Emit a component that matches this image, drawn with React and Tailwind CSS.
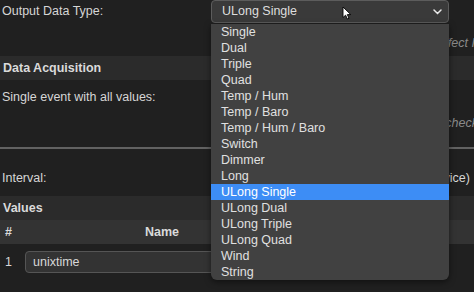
import React from 'react';

const OPTIONS = [
  'Single', 'Dual', 'Triple', 'Quad', 'Temp / Hum', 'Temp / Baro', 'Temp / Hum / Baro',
  'Switch', 'Dimmer', 'Long', 'ULong Single', 'ULong Dual', 'ULong Triple', 'ULong Quad',
  'Wind', 'String',
];
const SELECTED = 'ULong Single';

function Hint({ children, className = '' }) {
  return (
    <div className={`flex justify-end overflow-hidden whitespace-nowrap pl-[206px] h-[16px] leading-[16px] italic text-[#8a8a8a] ${className}`}>
      <span className="shrink-0">{children}</span>
    </div>
  );
}

function SectionBar({ children, className = '' }) {
  return (
    <div className={`flex items-center h-[24px] pl-[3px] bg-[#2b2b2b] font-bold text-[#dadada] ${className}`}>
      {children}
    </div>
  );
}

function Cursor() {
  return (
    <svg className="absolute left-[342px] top-[6px]" width="10" height="14" viewBox="0 0 10 14">
      <path d="M1 1 L1 11.5 L3.6 9.2 L5.4 13 L7 12.3 L5.3 8.6 L8.8 8.6 Z" fill="#fff" stroke="#000" strokeWidth="0.9" strokeLinejoin="round" />
    </svg>
  );
}

export default function App() {
  return (
    <div
      className="relative w-[474px] h-[292px] overflow-hidden bg-[#202020] text-[#d6d6d6] text-[12.5px]"
      style={{ fontFamily: '"Liberation Sans", Arial, sans-serif' }}
    >
      {/* Output data type */}
      <div className="flex items-center h-[23px]">
        <div className="w-[211px] pl-[2px]">Output Data Type:</div>
        <div className="w-[238px] h-[23px] flex items-center justify-between pl-[10px] pr-[6px] rounded-[4px] border border-[#5c5c5c] bg-[#3a3a3a] text-[#dedede]">
          <span>{SELECTED}</span>
          <svg width="9" height="6" viewBox="0 0 9 6">
            <path d="M1 1 L4.5 4.5 L8 1" fill="none" stroke="#e8e8e8" strokeWidth="1.5" strokeLinecap="round" />
          </svg>
        </div>
      </div>
      <Hint className="mt-[12px] -mr-[1px]">Ignored when value is a switch or Effect I</Hint>

      <SectionBar className="mt-[5px] h-[23px]">Data Acquisition</SectionBar>

      <div className="flex items-center h-[23px] mt-[6px]">
        <div className="w-[211px] pl-[2px]">Single event with all values:</div>
        <input type="checkbox" className="w-[13px] h-[13px]" />
      </div>
      <Hint className="mt-[6px] -mr-[4px]">Send all values in one event, uncheck</Hint>

      <div className="mt-[16px] h-[2px] bg-[#626262]" />

      <div className="flex items-center h-[23px] mt-[18px]">
        <div className="w-[211px] pl-[2px]">Interval:</div>
        <div className="w-[238px] h-[22px] rounded-[4px] border border-[#555] bg-[#333]" />
        <div className="flex-1 flex justify-end overflow-hidden whitespace-nowrap pr-[4px]">
          <span className="shrink-0">(0 = on device)</span>
        </div>
      </div>

      <SectionBar className="mt-[6px]">Values</SectionBar>

      <div className="flex items-center h-[24px] bg-[#333333] font-bold text-[#dadada]">
        <div className="w-[20px] pl-[5px]">#</div>
        <div className="w-[284px] text-center">Name</div>
        <div className="flex-1 text-center">Decimals</div>
      </div>

      <div className="flex items-center pt-[7px]">
        <div className="w-[25px] pl-[5px]">1</div>
        <div className="w-[280px] h-[22px] flex items-center pl-[7px] rounded-[4px] border border-[#555] bg-[#333] text-[#d8d8d8]">
          unixtime
        </div>
      </div>

      {/* Open select list */}
      <div className="absolute left-[211px] top-[24px] w-[238px] rounded-b-[6px] bg-[#414141] shadow-[0_2px_6px_rgba(0,0,0,0.5)] overflow-hidden">
        {OPTIONS.map((opt) => (
          <div
            key={opt}
            className={`h-[16px] leading-[16px] pl-[10px] ${opt === SELECTED ? 'bg-[#3d8df5] text-white' : 'text-[#e0e0e0]'}`}
          >
            {opt}
          </div>
        ))}
      </div>

      <Cursor />
    </div>
  );
}
